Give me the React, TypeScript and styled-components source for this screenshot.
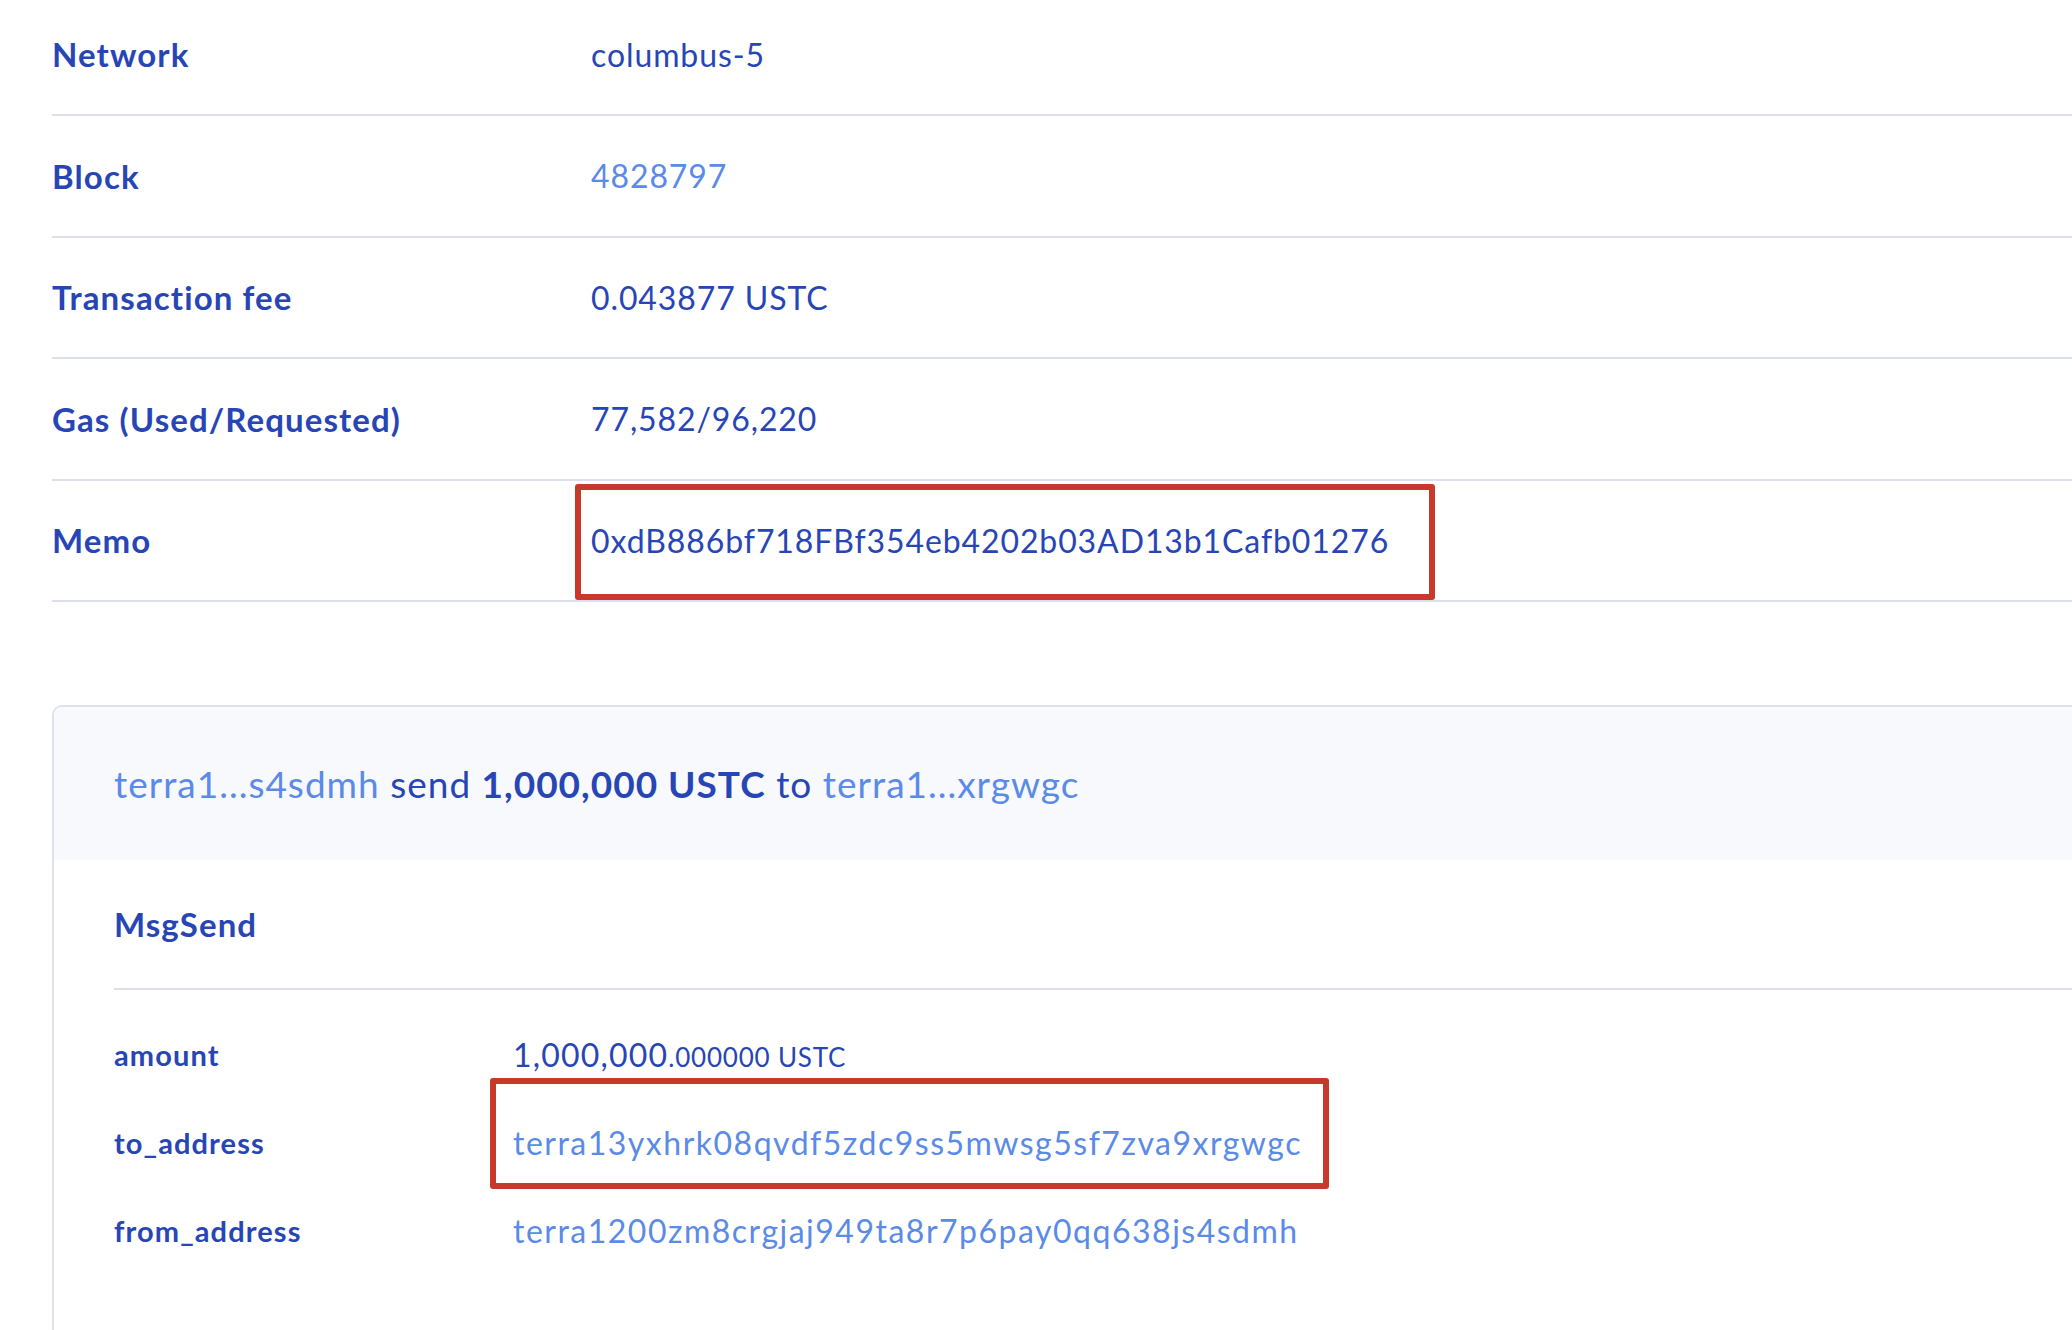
import styled, { createGlobalStyle } from 'styled-components';

const colors = {
    ink: '#2845b5',
    link: '#5b8ae8',
    line: '#dde0ea',
    cardLine: '#dfe2ee',
    cardHead: '#f7f9fd',
    mark: '#c7392a',
};

const GlobalStyle = createGlobalStyle`
    html, body {
        margin: 0;
        padding: 0;
        background: #ffffff;
    }

    body {
        font-family: Lato, "Noto Sans", "Liberation Sans", sans-serif;
        color: ${colors.ink};
        overflow: hidden;
    }
`;

const Page = styled.main`
    padding-left: 52px;
    width: 100%;
    box-sizing: border-box;
    overflow: hidden;
`;

const InfoList = styled.section`
    margin-top: -5.5px;
    display: flex;
    flex-direction: column;
`;

const InfoRow = styled.div`
    display: grid;
    grid-template-columns: 539px 1fr;
    align-items: center;
    height: 121.5px;
    box-sizing: border-box;
    border-bottom: 2px solid ${colors.line};
`;

const Label = styled.span<{ $size?: number }>`
    font-size: ${({ $size }) => $size ?? 33}px;
    font-weight: 700;
    letter-spacing: 1.1px;
    color: ${colors.ink};
    white-space: nowrap;
`;

const Value = styled.span<{ $link?: boolean; $size?: number; $spacing?: number }>`
    font-size: ${({ $size }) => $size ?? 32}px;
    font-weight: 400;
    letter-spacing: ${({ $spacing }) => $spacing ?? 0.9}px;
    color: ${({ $link }) => ($link ? colors.link : colors.ink)};
    white-space: nowrap;
`;

const Highlight = styled.span<{ $left: number; $top: number; $width: number; $height: number }>`
    position: relative;
    display: inline-block;

    &::after {
        content: '';
        position: absolute;
        left: ${({ $left }) => $left}px;
        top: calc(50% + ${({ $top }) => $top}px);
        width: ${({ $width }) => $width}px;
        height: ${({ $height }) => $height}px;
        box-sizing: border-box;
        border: 6px solid ${colors.mark};
        border-radius: 3px;
        pointer-events: none;
    }
`;

const Card = styled.section`
    margin-top: 103px;
    margin-right: -40px;
    border: 2px solid ${colors.cardLine};
    border-radius: 10px;
    background: #ffffff;
    overflow: hidden;
`;

const CardHeader = styled.header`
    height: 153px;
    display: flex;
    align-items: center;
    padding-left: 60px;
    background: ${colors.cardHead};
    font-size: 37px;
    letter-spacing: 1px;
    white-space: nowrap;
`;

const Addr = styled.span`
    color: ${colors.link};
`;

const Amount = styled.strong`
    font-weight: 700;
    color: ${colors.ink};
`;

const CardBody = styled.div`
    padding-left: 60px;
    padding-bottom: 120px;
`;

const MsgTitle = styled.h3`
    margin: 0;
    height: 130px;
    display: flex;
    align-items: center;
    box-sizing: border-box;
    border-bottom: 2px solid ${colors.line};
    font-size: 33px;
    font-weight: 700;
    letter-spacing: 1.1px;
`;

const FieldList = styled.div`
    padding-top: 20px;
    display: flex;
    flex-direction: column;
`;

const FieldRow = styled.div`
    display: grid;
    grid-template-columns: 399px 1fr;
    align-items: center;
    height: 88px;
`;

const Decimals = styled.span`
    font-size: 26px;
    letter-spacing: 0.8px;
`;

const info = [
    { label: 'Network', value: 'columbus-5' },
    { label: 'Block', value: '4828797', link: true },
    { label: 'Transaction fee', value: '0.043877 USTC' },
    { label: 'Gas (Used/Requested)', value: '77,582/96,220' },
];

const App = () => (
    <>
        <GlobalStyle />
        <Page>
            <InfoList>
                {info.map((row) => (
                    <InfoRow key={row.label}>
                        <Label>{row.label}</Label>
                        <Value $link={row.link}>{row.value}</Value>
                    </InfoRow>
                ))}
                <InfoRow>
                    <Label>Memo</Label>
                    <Value>
                        <Highlight $left={-16} $top={-56} $width={860} $height={116}>
                            0xdB886bf718FBf354eb4202b03AD13b1Cafb01276
                        </Highlight>
                    </Value>
                </InfoRow>
            </InfoList>

            <Card>
                <CardHeader>
                    <Addr>terra1...s4sdmh</Addr>
                    &nbsp;send&nbsp;
                    <Amount>1,000,000 USTC</Amount>
                    &nbsp;to&nbsp;
                    <Addr>terra1...xrgwgc</Addr>
                </CardHeader>
                <CardBody>
                    <MsgTitle>MsgSend</MsgTitle>
                    <FieldList>
                        <FieldRow>
                            <Label $size={29}>amount</Label>
                            <Value $size={32} $spacing={1.2}>
                                1,000,000<Decimals>.000000 USTC</Decimals>
                            </Value>
                        </FieldRow>
                        <FieldRow>
                            <Label $size={29}>to_address</Label>
                            <Value $link $size={32} $spacing={1.5}>
                                <Highlight $left={-23} $top={-64} $width={839} $height={111}>
                                    terra13yxhrk08qvdf5zdc9ss5mwsg5sf7zva9xrgwgc
                                </Highlight>
                            </Value>
                        </FieldRow>
                        <FieldRow>
                            <Label $size={29}>from_address</Label>
                            <Value $link $size={32} $spacing={1.5}>
                                terra1200zm8crgjaj949ta8r7p6pay0qq638js4sdmh
                            </Value>
                        </FieldRow>
                    </FieldList>
                </CardBody>
            </Card>
        </Page>
    </>
);

export default App;
